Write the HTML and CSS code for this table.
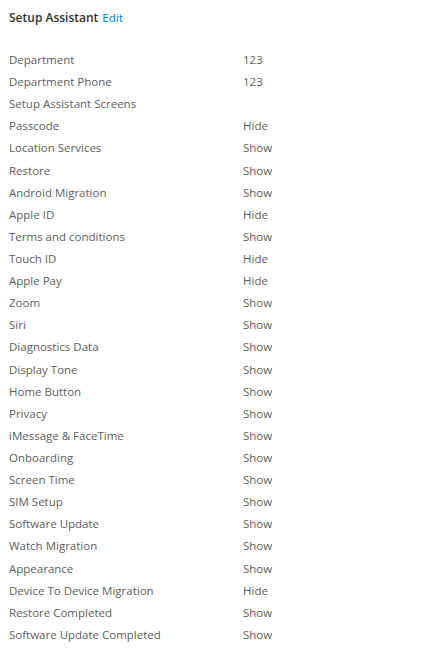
FILE: index.html
```html
<!DOCTYPE html>
<html>
<head>
<meta charset="utf-8">
<link rel="stylesheet" href="styles.css">
</head>
<body>
<div class="panel">
  <div class="header"><span class="title">Setup Assistant</span><a class="edit">Edit</a></div>
  <div class="list">
    <div class="row"><span class="k">Department</span><span class="v">123</span></div>
    <div class="row"><span class="k">Department Phone</span><span class="v">123</span></div>
    <div class="row"><span class="k">Setup Assistant Screens</span><span class="v"></span></div>
    <div class="row"><span class="k">Passcode</span><span class="v">Hide</span></div>
    <div class="row"><span class="k">Location Services</span><span class="v">Show</span></div>
    <div class="row"><span class="k">Restore</span><span class="v">Show</span></div>
    <div class="row"><span class="k">Android Migration</span><span class="v">Show</span></div>
    <div class="row"><span class="k">Apple ID</span><span class="v">Hide</span></div>
    <div class="row"><span class="k">Terms and conditions</span><span class="v">Show</span></div>
    <div class="row"><span class="k">Touch ID</span><span class="v">Hide</span></div>
    <div class="row"><span class="k">Apple Pay</span><span class="v">Hide</span></div>
    <div class="row"><span class="k">Zoom</span><span class="v">Show</span></div>
    <div class="row"><span class="k">Siri</span><span class="v">Show</span></div>
    <div class="row"><span class="k">Diagnostics Data</span><span class="v">Show</span></div>
    <div class="row"><span class="k">Display Tone</span><span class="v">Show</span></div>
    <div class="row"><span class="k">Home Button</span><span class="v">Show</span></div>
    <div class="row"><span class="k">Privacy</span><span class="v">Show</span></div>
    <div class="row"><span class="k">iMessage &amp; FaceTime</span><span class="v">Show</span></div>
    <div class="row"><span class="k">Onboarding</span><span class="v">Show</span></div>
    <div class="row"><span class="k">Screen Time</span><span class="v">Show</span></div>
    <div class="row"><span class="k">SIM Setup</span><span class="v">Show</span></div>
    <div class="row"><span class="k">Software Update</span><span class="v">Show</span></div>
    <div class="row"><span class="k">Watch Migration</span><span class="v">Show</span></div>
    <div class="row"><span class="k">Appearance</span><span class="v">Show</span></div>
    <div class="row"><span class="k">Device To Device Migration</span><span class="v">Hide</span></div>
    <div class="row"><span class="k">Restore Completed</span><span class="v">Show</span></div>
    <div class="row"><span class="k">Software Update Completed</span><span class="v">Show</span></div>
  </div>
</div>
</body>
</html>
```
FILE: styles.css
```css
html, body {
  margin: 0;
  padding: 0;
  background: #ffffff;
}
.panel {
  padding: 8px 0 0 9px;
  font-family: "Open Sans", "Noto Sans", sans-serif;
}
.header {
  display: flex;
  align-items: baseline;
  gap: 4px;
  height: 20px;
  line-height: 20px;
}
.title {
  font-size: 12px;
  font-weight: 600;
  color: #323130;
}
.edit {
  font-size: 11.5px;
  color: #0078d4;
}
.list {
  margin-top: 21px;
}
.row {
  display: grid;
  grid-template-columns: 234px 1fr;
  height: 22.12px;
  line-height: 22px;
  font-size: 11.5px;
  color: #605e5c;
}
```
